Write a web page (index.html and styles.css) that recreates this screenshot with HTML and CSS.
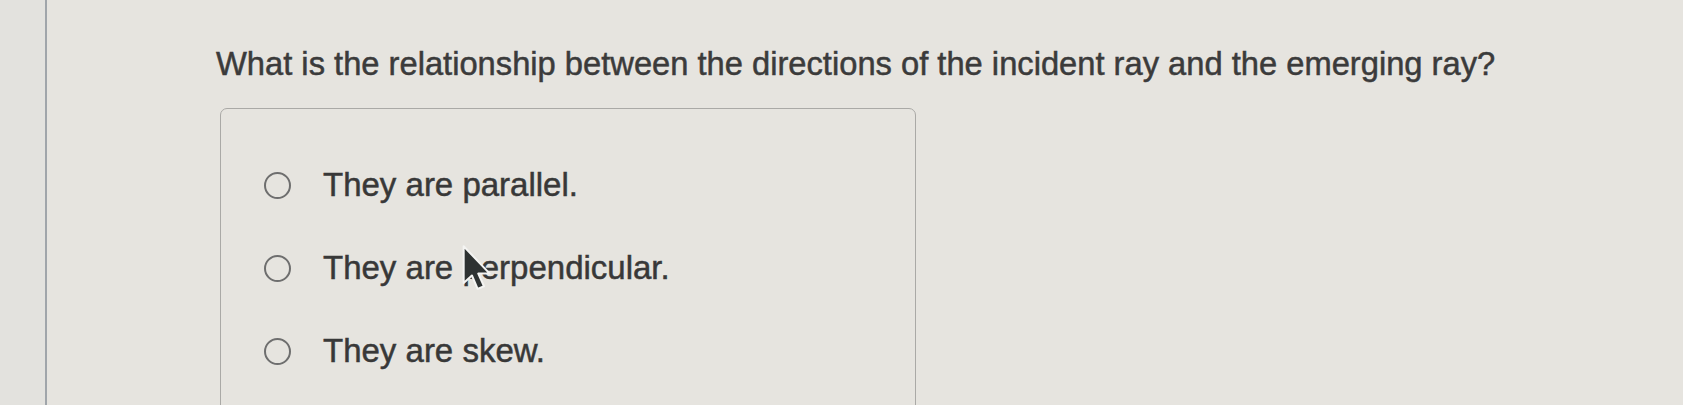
FILE: index.html
```html
<!DOCTYPE html>
<html lang="en">
<head>
<meta charset="utf-8">
<title>Question</title>
<link rel="stylesheet" href="styles.css">
</head>
<body>
<div class="page">
  <div class="side"></div>
  <main class="main">
    <h1 class="question">What is the relationship between the directions of the incident ray and the emerging ray?</h1>
    <div class="card">
      <label class="option"><span class="radio"></span><span class="label">They are parallel.</span></label>
      <label class="option"><span class="radio"></span><span class="label">They are perpendicular.</span></label>
      <label class="option"><span class="radio"></span><span class="label">They are skew.</span></label>
    </div>
  </main>
</div>
<svg class="cursor" width="32" height="47" viewBox="0 0 25 37" aria-hidden="true">
  <path d="M2 1 L2 30 L8.5 24 L13 34.5 L18 32.5 L13.5 22.5 L22.5 22.5 Z" fill="#2e3232" stroke="#f4f4f2" stroke-width="1.6" stroke-linejoin="round"/>
</svg>
</body>
</html>
```
FILE: styles.css
```css
html, body {
  margin: 0;
  padding: 0;
  height: 100%;
  overflow: hidden;
}
body {
  background: #e6e4df;
  font-family: "Liberation Sans", Arial, Helvetica, sans-serif;
  color: #3b3b3b;
  position: relative;
}
.page {
  display: flex;
  height: 405px;
}
.side {
  width: 45px;
  flex: none;
  background: #e3e2de;
  border-right: 2px solid #a0a5aa;
}
.main {
  flex: 1;
  padding-left: 169px;
  padding-top: 46px;
}
.question {
  margin: 0;
  font-size: 32.7px;
  font-weight: normal;
  line-height: 36px;
  -webkit-text-stroke: 0.5px #3b3b3b;
}
.card {
  margin-top: 26px;
  margin-left: 4px;
  width: 696px;
  height: 320px;
  border: 1.5px solid #aaa9a6;
  border-radius: 7px;
  box-sizing: border-box;
  padding: 58px 0 0 43px;
  display: flex;
  flex-direction: column;
  gap: 47px;
}
.option {
  display: flex;
  align-items: center;
  gap: 32px;
  height: 36px;
}
.radio {
  width: 23px;
  height: 23px;
  border: 2.8px solid #6e6e6e;
  border-radius: 50%;
  flex: none;
}
.label {
  font-size: 33px;
  line-height: 36px;
  color: #383838;
  -webkit-text-stroke: 0.5px #383838;
}
.cursor {
  position: absolute;
  left: 461px;
  top: 245px;
}
```
